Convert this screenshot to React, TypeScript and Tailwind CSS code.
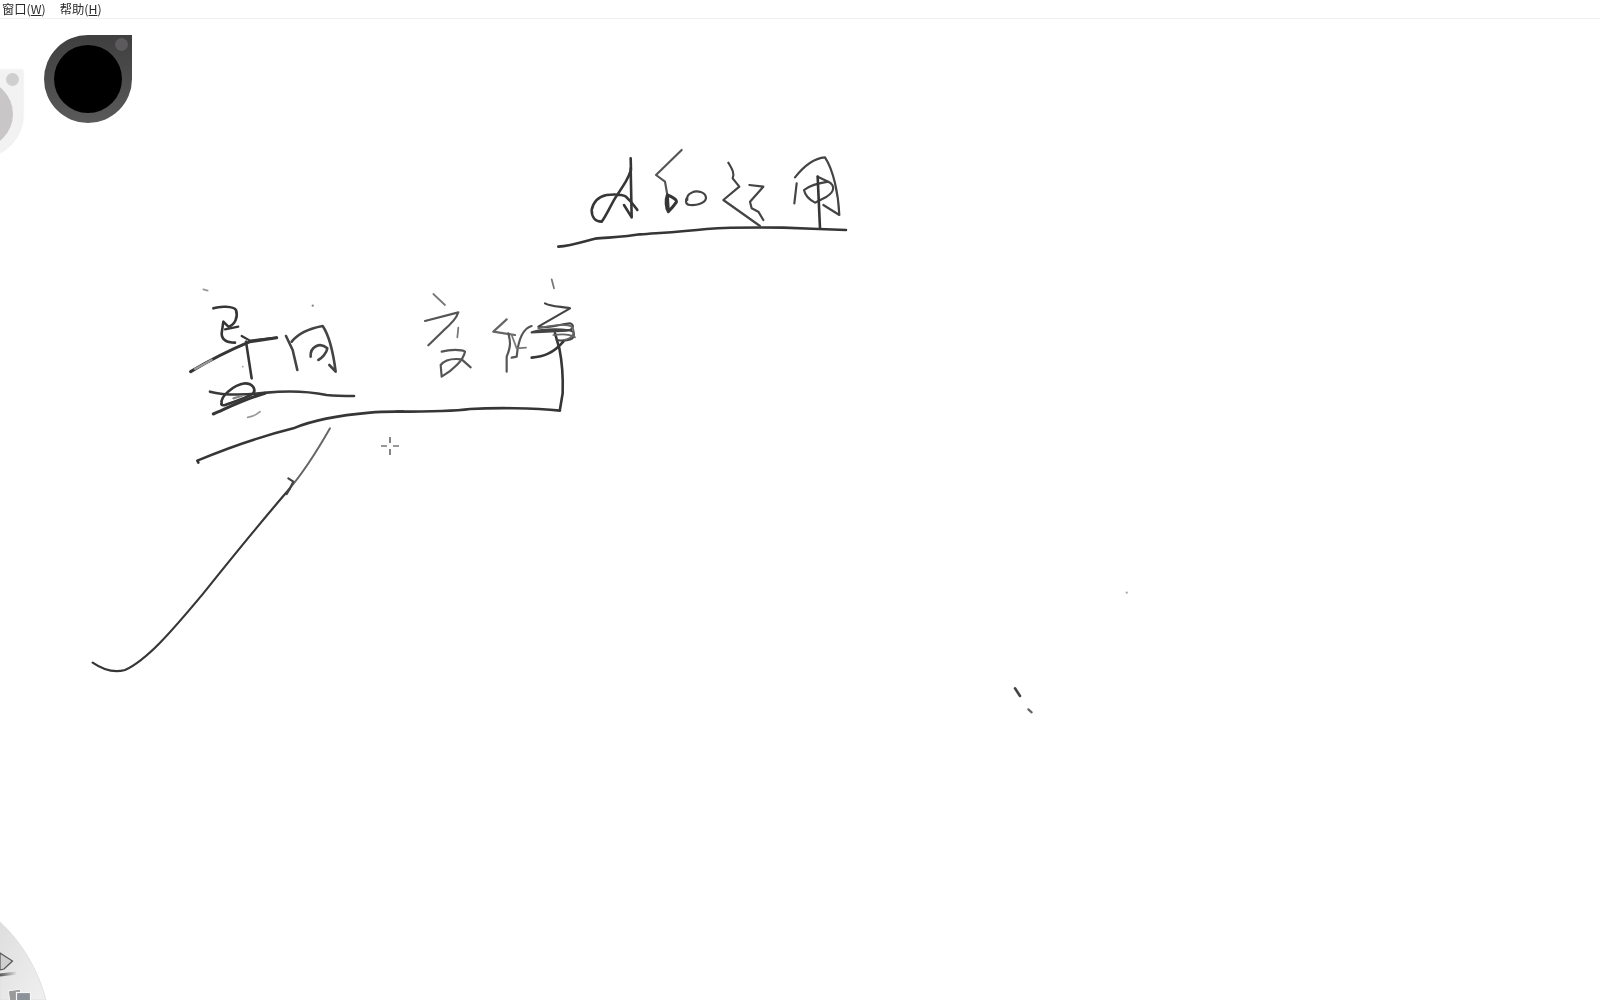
const ff = '"Noto Sans CJK SC", "Liberation Sans", sans-serif';

type S = { d: string; w?: number; c?: string };

function Strokes({ x, y, items }: { x: number; y: number; items: S[] }) {
  return (
    <g transform={`translate(${x} ${y}) scale(0.33333)`} fill="none" strokeLinecap="round" strokeLinejoin="round">
      {items.map((s, i) => (
        <path key={i} d={s.d} stroke={s.c ?? "#363636"} strokeWidth={(s.w ?? 6) * 1.3} />
      ))}
    </g>
  );
}

const title: S[] = [
  { d: "M25 320 C60 318 100 305 135 296 C180 292 230 290 270 283 C340 278 400 275 470 267 C540 262 620 262 700 263 C760 265 830 268 888 270" },
  { d: "M242 55 L243 90 C235 115 225 130 195 175 C180 200 170 225 155 245 C135 245 125 230 125 210 C130 185 145 170 170 165 C190 163 215 163 228 170 C245 185 255 200 262 210" },
  { d: "M222 195 L245 232 L242 85" },
  { d: "M395 30 L318 105 L345 125 L352 165", c: "#555", w: 5 },
  { d: "M352 165 L355 215 C348 205 346 180 352 165 C365 170 385 180 378 188 C370 200 360 210 355 215", w: 7 },
  { d: "M415 165 C405 180 405 195 420 195 C440 197 465 190 468 175 C468 155 440 150 425 158 C415 162 410 170 412 180", c: "#444", w: 5 },
  { d: "M535 68 C545 85 555 100 548 115 L568 140 L520 180 L630 258", w: 5, c: "#444" },
  { d: "M598 135 L640 140 L600 185 L605 205 L625 215 L640 240", w: 5, c: "#444" },
  { d: "M735 112 C760 80 790 55 825 52 C850 90 865 160 868 225 L820 195", c: "#444", w: 5 },
  { d: "M740 130 L733 190", c: "#444", w: 5 },
  { d: "M803 110 L835 125 C855 135 855 155 830 170 L795 188 C780 180 765 165 762 150 C775 140 800 130 835 125", w: 5, c: "#444" },
  { d: "M803 110 L810 265", w: 6 },
];

const left: S[] = [
  { d: "M100 58 L113 62", c: "#999", w: 4 },
  { d: "M130 115 C150 108 190 108 198 120 C205 140 195 165 175 170 L160 155 L155 190 C155 210 170 218 195 218" },
  { d: "M165 178 L205 170", w: 5 },
  { d: "M62 305 C120 270 180 240 240 215 L320 203", w: 7 },
  { d: "M215 198 L240 212 L320 203", w: 5 },
  { d: "M228 215 L245 325" },
  { d: "M75 297 L125 270", c: "#999", w: 5 },
  { d: "M348 198 L368 240 L382 300", c: "#444" },
  { d: "M365 215 C385 190 420 175 458 168 C480 200 490 250 497 305 L478 285", c: "#444" },
  { d: "M422 260 C420 230 450 215 472 235 C470 250 455 265 445 270", c: "#444" },
  { d: "M120 365 C170 378 230 375 290 368 C350 362 420 365 470 375 C500 378 530 378 552 378", c: "#3a3a3a" },
  { d: "M130 432 C180 410 230 385 285 370", w: 7 },
  { d: "M155 400 C150 380 190 345 225 340 C250 340 258 360 250 370 C230 385 190 395 165 405 C155 408 152 402 155 400" },
  { d: "M190 385 L215 378", c: "#888", w: 5 },
  { d: "M233 442 C250 440 262 432 270 425", c: "#999", w: 4 },
  { d: "M85 578 L82 572 C170 535 290 495 370 475 C430 450 520 435 600 428 C640 424 670 425 700 425" },
  { d: "M428 107 L428.5 107", c: "#888", w: 5 },
  { d: "M218 290 L218.5 290", c: "#aaa", w: 4 },
];

const mid: S[] = [
  { d: "M-10 455 C50 455 150 455 210 447 C280 443 400 443 480 452" },
  { d: "M480 448 L488 400 C490 340 485 300 478 265 L465 220" },
  { d: "M100 102 L135 135", c: "#777", w: 4 },
  { d: "M75 183 L175 157 C170 175 150 195 130 212 L85 256", c: "#555", w: 5 },
  { d: "M175 203 L172 232", c: "#777", w: 4 },
  { d: "M125 275 C150 268 185 268 195 275 C190 300 160 330 125 350 L122 315 C135 298 160 295 185 298 L212 322", c: "#555", w: 5 },
  { d: "M455 58 L462 85", c: "#777", w: 4 },
  { d: "M435 130 C450 140 490 140 510 145 L415 200 C440 208 490 190 510 190 C525 195 520 210 500 212 L395 217 C430 205 500 205 520 215 C530 240 500 245 470 240", c: "#444", w: 5 },
  { d: "M415 205 C450 195 500 190 515 200 C528 215 520 235 490 240", c: "#666", w: 4 },
  { d: "M460 225 C480 222 510 222 525 232", c: "#666", w: 4 },
  { d: "M395 293 C430 290 460 280 490 245" },
  { d: "M320 178 L280 215 L345 225", c: "#666", w: 5 },
  { d: "M325 220 C330 240 335 255 320 290 L320 335", c: "#555", w: 5 },
  { d: "M395 198 C370 205 355 235 350 290 L335 293", c: "#555", w: 5 },
  { d: "M335 225 L350 265 L378 263", c: "#777", w: 4 },
];

const tail: S[] = [
  { d: "M68 728 C100 750 130 760 165 750 C230 720 300 640 400 520 C480 420 560 320 660 205", w: 5 },
  { d: "M655 210 C690 170 740 95 780 25", c: "#666", w: 4.5 },
  { d: "M655 175 L670 185 L660 205 L650 222", c: "#444", w: 5 },
];

const specks: S[] = [
  { d: "M75 355 L90 378", c: "#444", w: 6 },
  { d: "M115 418 L125 427", c: "#666", w: 5 },
  { d: "M410 68 L410.5 68", c: "#aaa", w: 5 },
];

function Puck({ className, inner, dot, ring }: { className: string; inner: string; dot: string; ring: string }) {
  return (
    <div className={`absolute w-[88px] h-[88px] rounded-full rounded-tr-[9px] flex items-center justify-center ${ring} ${className}`}>
      <div className={`w-[68px] h-[68px] rounded-full ${inner}`} />
      <div className={`absolute top-[3px] right-[4px] w-[13px] h-[13px] rounded-full ${dot}`} />
    </div>
  );
}

export default function App() {
  return (
    <div className="relative w-[1600px] h-[1000px] overflow-hidden bg-white" style={{ fontFamily: ff }}>
      <div className="flex items-center h-[19px] gap-[14px] pl-[2px] border-b border-[#f0f0f0] text-[12.3px] leading-[18px] text-[#2a2a2a] blur-[0.25px]">
        <span>窗口(<span className="underline">W</span>)</span>
        <span>帮助(<span className="underline">H</span>)</span>
      </div>

      <svg className="absolute left-0 top-0 w-[1600px] h-[1000px] blur-[0.4px]" viewBox="0 0 1600 1000">
        <Strokes x={550} y={140} items={title} />
        <Strokes x={170} y={270} items={left} />
        <Strokes x={400} y={260} items={mid} />
        <Strokes x={70} y={420} items={tail} />
        <Strokes x={990} y={570} items={specks} />
        <path d="M381 446h6M393 446h6M390 437v6M390 449v6" stroke="#333" strokeWidth="1.2" />
        <defs>
          <linearGradient id="dock" x1="0" y1="0" x2="1" y2="1">
            <stop offset="0" stopColor="#dedede" />
            <stop offset="1" stopColor="#f0f0f0" />
          </linearGradient>
          <linearGradient id="shade" x1="0" y1="0" x2="1" y2="0">
            <stop offset="0" stopColor="#555" />
            <stop offset="1" stopColor="#555" stopOpacity="0" />
          </linearGradient>
        </defs>
        <path d="M0 922 C22 942 38 970 46 1000 L0 1000 Z" fill="url(#dock)" stroke="#e0e0e0" strokeWidth="1" />
        <path d="M0 953 L12.5 961 L4 969 L0 970 Z" fill="#cfcfcf" stroke="#555" strokeWidth="1.2" />
        <path d="M0 975 L17 973" stroke="url(#shade)" strokeWidth="3" />
        <g transform="rotate(-8 14 995)">
          <rect x="9" y="990" width="12" height="14" fill="#9a9a9a" stroke="#f4f4f4" strokeWidth="1" />
        </g>
        <rect x="16.5" y="992.5" width="14" height="12" fill="#8d929a" stroke="#f6f6f6" strokeWidth="1.2" />
      </svg>

      <Puck
        className="left-[44px] top-[35px]"
        ring="bg-gradient-to-b from-[#3f3f3f] to-[#5a5a5a]"
        inner="bg-black"
        dot="bg-[#5c5a5c]"
      />
      <Puck
        className="left-[-65px] top-[70px] shadow-[0_0_2px_#d8d8d8]"
        ring="bg-[#f2f2f3]"
        inner="bg-[#c9c6c8]"
        dot="bg-[#cfcfcf]"
      />
    </div>
  );
}
